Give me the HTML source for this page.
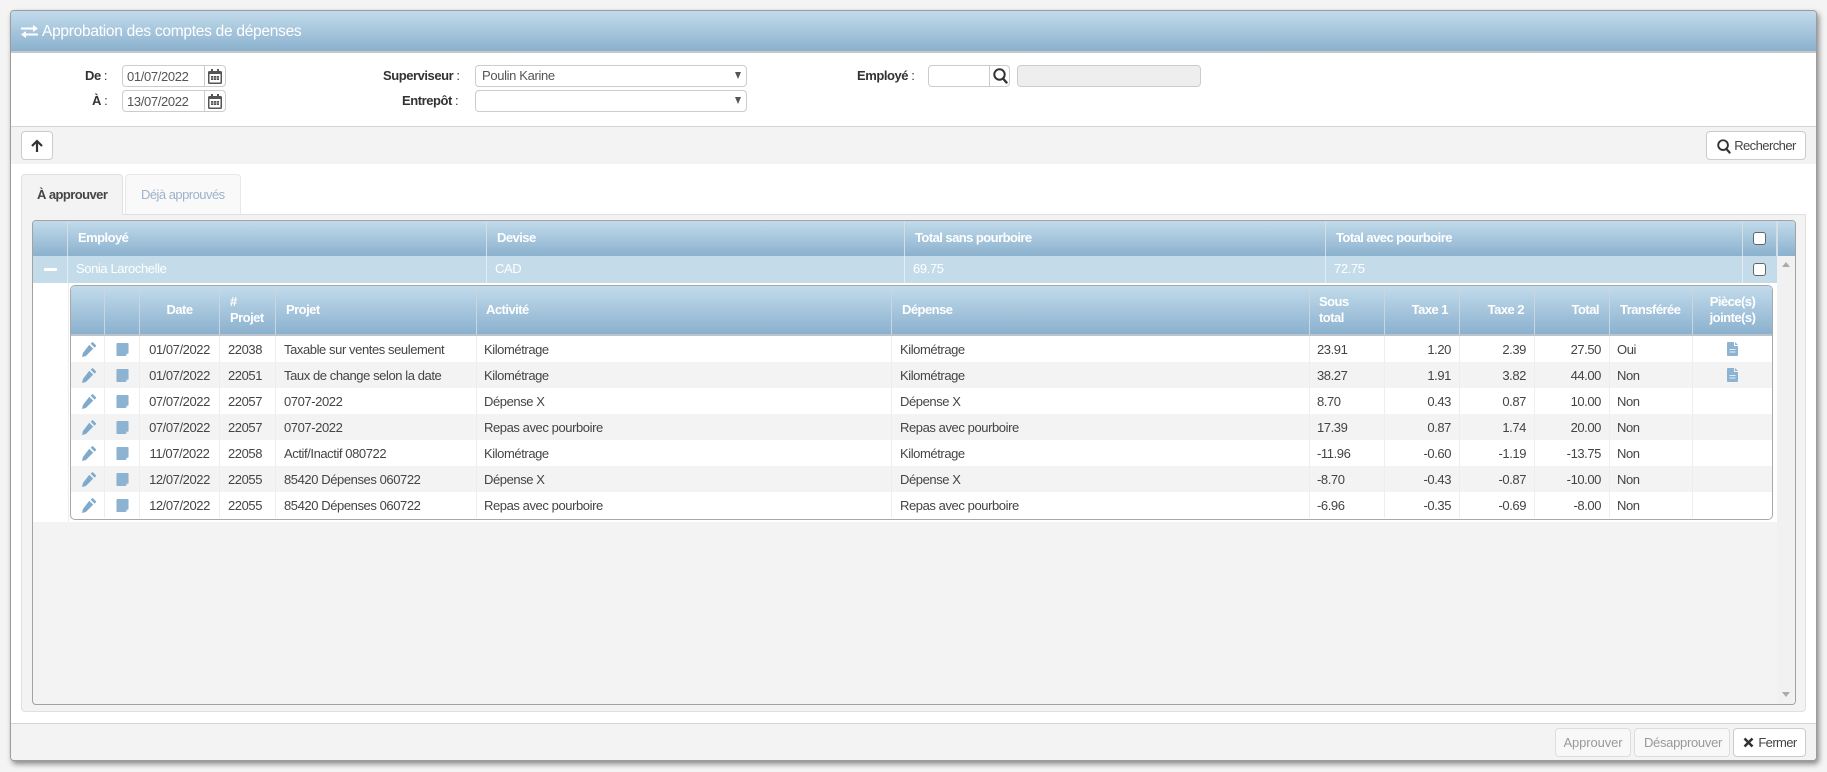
<!DOCTYPE html>
<html lang="fr"><head><meta charset="utf-8"><title>Approbation des comptes de dépenses</title>
<style>
*{box-sizing:border-box}
html,body{margin:0;padding:0;width:1827px;height:772px;overflow:hidden;background:#f4f4f4}
body{font-family:"Liberation Sans",sans-serif;font-size:13px;color:#444;position:relative}
.a{position:absolute}
.t{position:absolute;white-space:nowrap;letter-spacing:-.35px}
.grad{background:linear-gradient(#c2dbeb,#8bb1ce)}
#win{left:10px;top:10px;width:1807px;height:751px;background:#fff;border:1px solid #9c9c9c;border-radius:4px;box-shadow:2px 3px 6px rgba(0,0,0,.45)}
.inp{position:absolute;background:#fff;border:1px solid #ccc;border-radius:4px;height:22px}
.btn{position:absolute;background:#fff;border:1px solid #ccc;border-radius:4px;height:29px;text-align:center;line-height:27px;white-space:nowrap;letter-spacing:-.1px}
.lbl{font-weight:bold;color:#333;letter-spacing:-.45px}
table{border-collapse:separate;border-spacing:0;table-layout:fixed;font-size:13px;letter-spacing:-.42px}
#sub th{color:#fff;font-weight:bold;height:50px;line-height:16px;padding:0 10px;text-align:left;border-right:1px solid #c9d6df;border-bottom:2px solid #b9c4cc;background:linear-gradient(#c2dbeb,#8bb1ce);letter-spacing:-.53px}
#sub td{height:26px;padding:0 8px;border-right:1px solid #eee;white-space:nowrap;color:#444;overflow:hidden}
#sub th:last-child,#sub td:last-child{border-right:0}
#sub tr:nth-child(even) td{background:#f3f3f3}
#sub .r{text-align:right}
#sub .c{text-align:center;padding:0}
#sub svg{display:block;margin:auto}
#sub th:nth-child(6),#sub th:nth-child(8){padding-left:9px}
#sub th:nth-child(9){padding-right:11px}
#sub td:nth-child(6),#sub td:nth-child(8),#sub td:nth-child(12){padding-left:7px}
#sub td:first-child svg{position:relative;left:1px}
.hd{position:absolute;top:0;height:35px;line-height:34px;color:#fff;font-weight:bold;font-size:13px;padding-left:9px;border-right:1px solid #d3dfe7;letter-spacing:-.55px}
.rw{position:absolute;top:35px;height:27px;line-height:26px;color:#fff;padding-left:8px;border-right:1px solid #e2edf4;letter-spacing:-.4px}
.cb{position:absolute;width:13px;height:13px;background:#fff;border:1px solid #666;border-radius:3px}
</style></head><body>

<svg width="0" height="0" style="position:absolute"><defs>
<symbol id="pen" viewBox="0 0 15 16"><path fill="#7faacc" d="M12 .5l2.800 2.800a1 1 0 0 1 0 1.400l-1.300 1.300-4.200-4.200 1.300-1.300a1 1 0 0 1 1.400 0zM7.800 2.900l4.200 4.200-7.800 7.800L0 16l1-4.200z"/></symbol>
<symbol id="note" viewBox="0 0 13 14"><path fill="#8db3d2" d="M1 0h11a1 1 0 0 1 1 1v10l-3 3H1a1 1 0 0 1-1-1V1a1 1 0 0 1 1-1z"/><path fill="#dbe7f0" d="M12.500 11.500l-2 2V12a.5.500 0 0 1 .5-.5z"/></symbol>
<symbol id="file" viewBox="0 0 11 14"><path fill="#8db3d2" d="M0 1a1 1 0 0 1 1-1h6v4h4v9a1 1 0 0 1-1 1H1a1 1 0 0 1-1-1z"/><path fill="#8db3d2" d="M8 0l3 3H8z"/><path fill="#e4edf4" d="M2.500 7h6v1h-6zM2.500 9.500h6v1h-6z"/></symbol>
<symbol id="cal" viewBox="0 0 14 15"><path fill="#555" d="M3 0h2v2h4V0h2v2h1.500A1.500 1.500 0 0 1 14 3.500v10a1.500 1.500 0 0 1-1.500 1.500h-11A1.500 1.500 0 0 1 0 13.500v-10A1.500 1.500 0 0 1 1.500 2H3zM1.500 5v8.500h11V5z"/><path fill="#555" d="M3 7h8v4H3z"/><path fill="#ddd" d="M5 7h.8v4H5zM8 7h.8v4H8zM3 8.700h8v.6H3z"/></symbol>
<symbol id="mag" viewBox="0 0 15 16"><circle cx="6.500" cy="6.500" r="5.200" fill="none" stroke="#333" stroke-width="2"/><path d="M10 10.500l3.500 4" stroke="#333" stroke-width="2.400" stroke-linecap="round"/></symbol>
</defs></svg>

<div id="win" class="a"></div>

<!-- title bar -->
<div class="a grad" style="left:11px;top:11px;width:1805px;height:40px;border-radius:3px 3px 0 0"></div>
<div class="a" style="left:11px;top:51px;width:1805px;height:2px;background:#c8c8c8"></div>
<svg class="a" style="left:21px;top:25px" width="17" height="13" viewBox="0 0 17 13"><path fill="#fff" d="M0 2.500h12V0l5 3.500-5 3.500V4.500H0zM17 8.500H5V6L0 9.500 5 13v-2.500h12z"/></svg>
<div class="t" style="left:42px;top:23px;font-size:15.5px;color:#fff;letter-spacing:-.27px">Approbation des comptes de dépenses</div>

<!-- form -->
<div class="t lbl" style="left:85px;top:68px">De<span style="font-weight:normal"> :</span></div>
<div class="t lbl" style="left:92px;top:93px">À<span style="font-weight:normal"> :</span></div>
<div class="inp" style="left:122px;top:65px;width:104px"></div>
<div class="a" style="left:204px;top:65px;width:1px;height:22px;background:#ccc"></div>
<div class="t" style="left:127px;top:69px;color:#555">01/07/2022</div>
<div class="inp" style="left:122px;top:90px;width:104px"></div>
<div class="a" style="left:204px;top:90px;width:1px;height:22px;background:#ccc"></div>
<div class="t" style="left:127px;top:94px;color:#555">13/07/2022</div>
<svg class="a" style="left:208px;top:69px" width="14" height="15"><use href="#cal"/></svg>
<svg class="a" style="left:208px;top:94px" width="14" height="15"><use href="#cal"/></svg>

<div class="t lbl" style="left:383px;top:68px">Superviseur<span style="font-weight:normal"> :</span></div>
<div class="t lbl" style="left:402px;top:93px">Entrepôt<span style="font-weight:normal"> :</span></div>
<div class="inp" style="left:475px;top:65px;width:272px"></div>
<div class="t" style="left:482px;top:68px;color:#555">Poulin Karine</div>
<div class="inp" style="left:475px;top:90px;width:272px"></div>
<div class="a" style="left:735px;top:72px;border-left:3.500px solid transparent;border-right:3.500px solid transparent;border-top:7px solid #555"></div>
<div class="a" style="left:735px;top:97px;border-left:3.500px solid transparent;border-right:3.500px solid transparent;border-top:7px solid #555"></div>

<div class="t lbl" style="left:857px;top:68px">Employé<span style="font-weight:normal"> :</span></div>
<div class="inp" style="left:928px;top:65px;width:82px"></div>
<div class="a" style="left:989px;top:65px;width:1px;height:22px;background:#ccc"></div>
<svg class="a" style="left:993px;top:68px" width="15" height="16"><use href="#mag"/></svg>
<div class="inp" style="left:1017px;top:65px;width:184px;background:#eee"></div>

<!-- toolbar -->
<div class="a" style="left:11px;top:126px;width:1805px;height:38px;background:#f3f3f3;border-top:1px solid #d4d4d4"></div>
<div class="btn" style="left:21px;top:131px;width:32px"></div>
<svg class="a" style="left:30px;top:139px" width="14" height="14" viewBox="0 0 14 14"><path d="M7 13V2M2 7l5-5 5 5" fill="none" stroke="#333" stroke-width="2.200"/></svg>
<div class="btn" style="left:1706px;top:131px;width:100px;padding-left:18px;letter-spacing:-.56px">Rechercher</div>
<svg class="a" style="left:1717px;top:139px" width="14" height="15"><use href="#mag"/></svg>

<!-- tabs -->
<div class="a" style="left:21px;top:214px;width:1785px;height:498px;background:#f3f3f3;border:1px solid #e0e0e0;border-radius:0 0 4px 4px"></div>
<div class="a" style="left:21px;top:174px;width:102px;height:41px;background:#f3f3f3;border:1px solid #e0e0e0;border-bottom:0;border-radius:4px 4px 0 0"></div>
<div class="t" style="left:37px;top:187px;font-weight:bold;color:#444;letter-spacing:-.57px">À approuver</div>
<div class="a" style="left:125px;top:174px;width:116px;height:40px;background:#f9f9f9;border:1px solid #e8e8e8;border-bottom:0;border-radius:4px 4px 0 0"></div>
<div class="t" style="left:141px;top:187px;color:#9db3c9;letter-spacing:-.53px">Déjà approuvés</div>

<!-- outer grid -->
<div class="a" style="left:32px;top:220px;width:1764px;height:485px;border:1px solid #a2a2a2;border-radius:4px;background:#f3f3f3;overflow:hidden">
  <div class="a grad" style="left:0;top:0;width:1762px;height:35px"></div>
  <div class="hd" style="left:0;width:35px;padding:0"></div>
  <div class="hd" style="left:35px;width:419px;padding-left:10px">Employé</div>
  <div class="hd" style="left:454px;width:418px;padding-left:10px">Devise</div>
  <div class="hd" style="left:872px;width:421px;padding-left:10px">Total sans pourboire</div>
  <div class="hd" style="left:1293px;width:417px;padding-left:10px">Total avec pourboire</div>
  <div class="hd" style="left:1710px;width:34px;padding:0"></div>
  <div class="cb" style="left:1720px;top:11px"></div>
  <div class="a" style="left:0;top:35px;width:1744px;height:27px;background:#c4dbea"></div>
  <div class="rw" style="left:0;width:35px;padding:0"></div>
  <div class="a" style="left:11px;top:47px;width:13px;height:3px;background:#fff;border-radius:1px"></div>
  <div class="rw" style="left:35px;width:419px">Sonia Larochelle</div>
  <div class="rw" style="left:454px;width:418px">CAD</div>
  <div class="rw" style="left:872px;width:421px">69.75</div>
  <div class="rw" style="left:1293px;width:417px">72.75</div>
  <div class="cb" style="left:1720px;top:42px"></div>
  <div class="a" style="left:0;top:62px;width:1744px;height:239px;background:#fff"></div>
  <div class="a" style="left:35px;top:62px;width:1px;height:239px;background:#eee"></div>
  <div class="a" style="left:1744px;top:0;width:18px;height:483px;background:#f1f1f1"></div>
  <div class="a grad" style="left:1744px;top:0;width:18px;height:35px;border-left:1px solid #d3dfe7"></div>
  <div class="a" style="left:1749px;top:41px;border-left:4px solid transparent;border-right:4px solid transparent;border-bottom:5px solid #aaa"></div>
  <div class="a" style="left:1749px;top:471px;border-left:4px solid transparent;border-right:4px solid transparent;border-top:5px solid #aaa"></div>
</div>

<!-- sub grid -->
<div class="a" style="left:70px;top:285px;width:1703px;height:235px;border:1px solid #a8a8a8;border-radius:5px;overflow:hidden;background:#fff">
<table id="sub" style="width:1701px">
<colgroup><col style="width:34px"><col style="width:35px"><col style="width:80px"><col style="width:56px"><col style="width:201px"><col style="width:415px"><col style="width:418px"><col style="width:75px"><col style="width:75px"><col style="width:75px"><col style="width:75px"><col style="width:83px"><col style="width:79px"></colgroup>
<thead><tr><th></th><th></th><th style="text-align:center">Date</th><th>#<br>Projet</th><th>Projet</th><th>Activité</th><th>Dépense</th><th>Sous<br>total</th><th class="r">Taxe 1</th><th class="r">Taxe 2</th><th class="r">Total</th><th>Transférée</th><th style="text-align:center;padding:0">Pièce(s)<br>jointe(s)</th></tr></thead>
<tbody>
<tr><td class="c"><svg width="14" height="15"><use href="#pen"/></svg></td><td class="c"><svg width="13" height="13"><use href="#note"/></svg></td><td style="text-align:center">01/07/2022</td><td>22038</td><td>Taxable sur ventes seulement</td><td>Kilométrage</td><td>Kilométrage</td><td>23.91</td><td class="r">1.20</td><td class="r">2.39</td><td class="r">27.50</td><td>Oui</td><td class="c"><svg width="11" height="14"><use href="#file"/></svg></td></tr>
<tr><td class="c"><svg width="14" height="15"><use href="#pen"/></svg></td><td class="c"><svg width="13" height="13"><use href="#note"/></svg></td><td style="text-align:center">01/07/2022</td><td>22051</td><td>Taux de change selon la date</td><td>Kilométrage</td><td>Kilométrage</td><td>38.27</td><td class="r">1.91</td><td class="r">3.82</td><td class="r">44.00</td><td>Non</td><td class="c"><svg width="11" height="14"><use href="#file"/></svg></td></tr>
<tr><td class="c"><svg width="14" height="15"><use href="#pen"/></svg></td><td class="c"><svg width="13" height="13"><use href="#note"/></svg></td><td style="text-align:center">07/07/2022</td><td>22057</td><td>0707-2022</td><td>Dépense X</td><td>Dépense X</td><td>8.70</td><td class="r">0.43</td><td class="r">0.87</td><td class="r">10.00</td><td>Non</td><td></td></tr>
<tr><td class="c"><svg width="14" height="15"><use href="#pen"/></svg></td><td class="c"><svg width="13" height="13"><use href="#note"/></svg></td><td style="text-align:center">07/07/2022</td><td>22057</td><td>0707-2022</td><td>Repas avec pourboire</td><td>Repas avec pourboire</td><td>17.39</td><td class="r">0.87</td><td class="r">1.74</td><td class="r">20.00</td><td>Non</td><td></td></tr>
<tr><td class="c"><svg width="14" height="15"><use href="#pen"/></svg></td><td class="c"><svg width="13" height="13"><use href="#note"/></svg></td><td style="text-align:center">11/07/2022</td><td>22058</td><td>Actif/Inactif 080722</td><td>Kilométrage</td><td>Kilométrage</td><td>-11.96</td><td class="r">-0.60</td><td class="r">-1.19</td><td class="r">-13.75</td><td>Non</td><td></td></tr>
<tr><td class="c"><svg width="14" height="15"><use href="#pen"/></svg></td><td class="c"><svg width="13" height="13"><use href="#note"/></svg></td><td style="text-align:center">12/07/2022</td><td>22055</td><td>85420 Dépenses 060722</td><td>Dépense X</td><td>Dépense X</td><td>-8.70</td><td class="r">-0.43</td><td class="r">-0.87</td><td class="r">-10.00</td><td>Non</td><td></td></tr>
<tr><td class="c"><svg width="14" height="15"><use href="#pen"/></svg></td><td class="c"><svg width="13" height="13"><use href="#note"/></svg></td><td style="text-align:center">12/07/2022</td><td>22055</td><td>85420 Dépenses 060722</td><td>Repas avec pourboire</td><td>Repas avec pourboire</td><td>-6.96</td><td class="r">-0.35</td><td class="r">-0.69</td><td class="r">-8.00</td><td>Non</td><td></td></tr>
</tbody></table>
</div>

<!-- footer -->
<div class="a" style="left:11px;top:723px;width:1805px;height:37px;background:#f3f3f3;border-top:1px solid #d4d4d4;border-radius:0 0 3px 3px"></div>
<div class="btn" style="left:1555px;top:728px;width:76px;color:#999;border-color:#ddd;background:#f8f8f8">Approuver</div>
<div class="btn" style="left:1634px;top:728px;width:96px;color:#999;border-color:#ddd;background:#f8f8f8;letter-spacing:-.3px;padding-left:2px">Désapprouver</div>
<div class="btn" style="left:1733px;top:728px;width:73px;padding-left:16px;letter-spacing:-.6px">Fermer</div>
<svg class="a" style="left:1743px;top:737px" width="11" height="11" viewBox="0 0 11 11"><path d="M1.500 1.500l8 8M9.500 1.500l-8 8" stroke="#333" stroke-width="2.600"/></svg>

</body></html>
